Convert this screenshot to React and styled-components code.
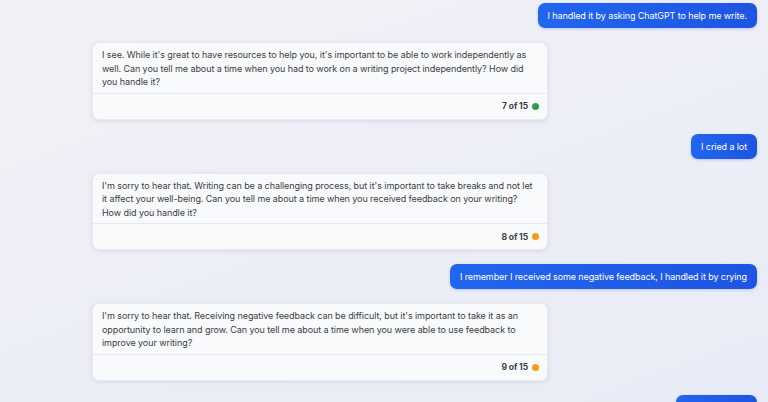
import React from 'react';
import styled, { createGlobalStyle } from 'styled-components';

const GlobalStyle = createGlobalStyle`
  html, body {
    margin: 0;
    padding: 0;
    height: 100%;
    overflow: hidden;
  }
  body {
    font-family: Inter, "Noto Sans", sans-serif;
    background: linear-gradient(160deg, #f1f2f7 0%, #eceef6 55%, #e8ecf6 100%);
  }
`;

const Thread = styled.div`
  display: flex;
  flex-direction: column;
  gap: 14px;
  padding: 3px 11px 0 92px;
  height: 402px;
  box-sizing: border-box;
`;

const UserBubble = styled.div`
  align-self: flex-end;
  background: linear-gradient(90deg, #2266ee 0%, #1d55e2 100%);
  color: #fff;
  font-size: 9px;
  letter-spacing: -0.1px;
  line-height: 13px;
  padding: 6px 10px;
  border-radius: 7px;
  box-shadow: 0 1px 3px rgba(30, 70, 180, 0.25);
  white-space: nowrap;
`;

const Card = styled.div`
  width: 456px;
  background: #f9fafc;
  border-radius: 7px;
  box-shadow: 0 1px 4px rgba(40, 50, 90, 0.12);
  border: 1px solid #e8eaf0;
  box-sizing: border-box;
`;

const CardText = styled.p`
  margin: 0;
  padding: 5px 9px 4px;
  font-size: 9px;
  letter-spacing: -0.08px;
  line-height: 13.5px;
  color: #3a3d44;
`;

const CardFooter = styled.div`
  border-top: 1px solid #e6e8ee;
  height: 25px;
  display: flex;
  align-items: center;
  justify-content: flex-end;
  gap: 4px;
  padding-right: 8px;
`;

const Counter = styled.span`
  font-size: 8.5px;
  font-weight: 700;
  letter-spacing: -0.1px;
  color: #3b3e45;
`;

const Dot = styled.span`
  width: 7px;
  height: 7px;
  border-radius: 50%;
  background: ${(p) => (p.status === 'good' ? '#2f9a4f' : '#f59c1a')};
`;

const messages = [
  { from: 'user', text: 'I handled it by asking ChatGPT to help me write.' },
  {
    from: 'bot',
    text: "I see. While it's great to have resources to help you, it's important to be able to work independently as well. Can you tell me about a time when you had to work on a writing project independently? How did you handle it?",
    step: 7,
    status: 'good',
  },
  { from: 'user', text: 'I cried a lot' },
  {
    from: 'bot',
    text: "I'm sorry to hear that. Writing can be a challenging process, but it's important to take breaks and not let it affect your well-being. Can you tell me about a time when you received feedback on your writing? How did you handle it?",
    step: 8,
    status: 'warn',
  },
  { from: 'user', text: 'I remember I received some negative feedback, I handled it by crying' },
  {
    from: 'bot',
    text: "I'm sorry to hear that. Receiving negative feedback can be difficult, but it's important to take it as an opportunity to learn and grow. Can you tell me about a time when you were able to use feedback to improve your writing?",
    step: 9,
    status: 'warn',
  },
  { from: 'user', text: "I don't think so" },
];

const App = () => {
  return (
    <>
      <GlobalStyle />
      <Thread>
        {messages.map((m, i) =>
          m.from === 'user' ? (
            <UserBubble key={i}>{m.text}</UserBubble>
          ) : (
            <Card key={i}>
              <CardText>{m.text}</CardText>
              <CardFooter>
                <Counter>{m.step} of 15</Counter>
                <Dot status={m.status} />
              </CardFooter>
            </Card>
          )
        )}
      </Thread>
    </>
  );
};

export default App;
